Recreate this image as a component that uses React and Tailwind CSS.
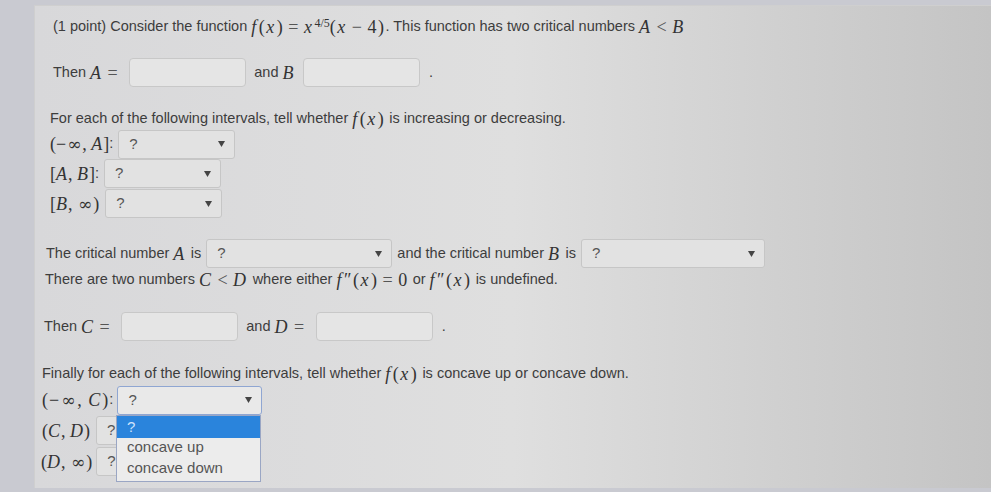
import React from "react";

// MathJax-like inline math: wide glyph spacing for formulas, tighter for interval labels
const serif = "font-['Liberation_Serif','DejaVu_Serif',serif] text-[18px] leading-none text-[#333]";
const formula = serif + " tracking-[1.5px]";

const V = ({ children }) => <i className="italic pr-[1px]">{children}</i>;
const Op = ({ children }) => <span className="mx-[4px] text-[#555]">{children}</span>;
const Inf = () => <span className="inline-block px-[1px] font-['DejaVu_Serif',serif] text-[17px]">∞</span>;

const Caret = () => (
  <svg width="7" height="6" viewBox="0 0 7 6" className="shrink-0">
    <path d="M0 0 L7 0 L3.5 6 Z" fill="#444" />
  </svg>
);

const Select = ({ w, focused }) => (
  <div
    className={
      "flex h-[29px] items-center justify-between rounded-[3px] border pl-[10px] pr-[9px] text-[15px] text-[#555] " +
      (focused ? "border-[#8fa6d2] bg-[#e9e9e9]" : "border-[#c6c6c6] bg-[#e2e2e2]")
    }
    style={{ width: w }}
  >
    <span>?</span>
    <Caret />
  </div>
);

const Input = () => (
  <div className="h-[29px] w-[117px] rounded-[4px] border border-[#c8c8c8] bg-[#e5e5e5]" />
);

const App = () => {
  return (
    <div className="h-[492px] w-[991px] overflow-hidden bg-[#c9cad1] pl-[34px] pt-[5px] font-['Liberation_Sans',Arial,sans-serif] text-[14.5px] text-[#3d3d3d]">
      <div className="relative h-[483px] border-l border-t border-[#cfcfcf] bg-gradient-to-r from-[#d8d8da] via-[#dfdfdf] to-[#c4c4c4]">
        {/* first question */}
        <div className="box-content flex h-[24px] items-center pl-[18px] pt-[9px]">
          <span>(1 point) Consider the function&nbsp;</span>
          <span className={formula}>
            <V>f</V>(<V>x</V>)<Op>=</Op><V>x</V>
            <sup className="text-[12px] tracking-normal">4/5</sup>(<V>x</V><Op>−</Op>4)
          </span>
          <span>. This function has two critical numbers&nbsp;</span>
          <span className={formula}>
            <V>A</V><Op>&lt;</Op><V>B</V>
          </span>
        </div>

        <div className="mt-[19px] flex h-[29px] items-center pl-[18px]">
          <span>Then&nbsp;</span>
          <span className={formula}>
            <V>A</V><Op>=</Op>
          </span>
          <span className="ml-[6px]">
            <Input />
          </span>
          <span className="ml-[8px]">and&nbsp;</span>
          <span className={formula}>
            <V>B</V>
          </span>
          <span className="ml-[7px]">
            <Input />
          </span>
          <span className="ml-[9px]">.</span>
        </div>

        {/* increasing / decreasing */}
        <div className="mt-[21px] flex h-[22px] items-center pl-[15px]">
          <span>For each of the following intervals, tell whether&nbsp;</span>
          <span className={formula}>
            <V>f</V>(<V>x</V>)
          </span>
          <span>&nbsp;is increasing or decreasing.</span>
        </div>
        <div className="flex h-[28px] items-center pl-[15px]">
          <span className={serif}>
            (−<Inf />, <V>A</V>]
          </span>
          <span className="mr-[5px]">:</span>
          <Select w="117px" />
        </div>
        <div className="mt-[1px] flex h-[29px] items-center pl-[15px]">
          <span className={serif}>
            [<V>A</V>, <V>B</V>]
          </span>
          <span className="mr-[5px]">:</span>
          <Select w="117px" />
        </div>
        <div className="mt-[1px] flex h-[29px] items-center pl-[15px]">
          <span className={serif + " mr-[6px]"}>
            [<V>B</V>, <Inf />)
          </span>
          <Select w="117px" />
        </div>

        {/* max / min */}
        <div className="mt-[21px] flex h-[29px] items-center pl-[11px]">
          <span>The critical number&nbsp;</span>
          <span className={formula}>
            <V>A</V>
          </span>
          <span className="mr-[5px]">&nbsp;is</span>
          <Select w="186px" />
          <span className="ml-[5px]">and the critical number&nbsp;</span>
          <span className={formula}>
            <V>B</V>
          </span>
          <span className="mr-[5px]">&nbsp;is</span>
          <Select w="184px" />
        </div>
        <div className="flex h-[23px] items-center pl-[10px]">
          <span>There are two numbers&nbsp;</span>
          <span className={formula}>
            <V>C</V><Op>&lt;</Op><V>D</V>
          </span>
          <span>&nbsp;where either&nbsp;</span>
          <span className={formula}>
            <V>f</V>″(<V>x</V>)<Op>=</Op>0
          </span>
          <span>&nbsp;or&nbsp;</span>
          <span className={formula}>
            <V>f</V>″(<V>x</V>)
          </span>
          <span>&nbsp;is undefined.</span>
        </div>

        <div className="mt-[21px] flex h-[29px] items-center pl-[9px]">
          <span>Then&nbsp;</span>
          <span className={formula}>
            <V>C</V><Op>=</Op>
          </span>
          <span className="ml-[6px]">
            <Input />
          </span>
          <span className="ml-[8px]">and&nbsp;</span>
          <span className={formula}>
            <V>D</V><Op>=</Op>
          </span>
          <span className="ml-[6px]">
            <Input />
          </span>
          <span className="ml-[9px]">.</span>
        </div>

        {/* concavity */}
        <div className="mt-[22px] flex h-[22px] items-center pl-[7px]">
          <span>Finally for each of the following intervals, tell whether&nbsp;</span>
          <span className={formula}>
            <V>f</V>(<V>x</V>)
          </span>
          <span>&nbsp;is concave up or concave down.</span>
        </div>
        <div className="flex h-[30px] items-center pl-[7px]">
          <span className={serif + " tracking-[1px]"}>
            (−<Inf />, <V>C</V>)
          </span>
          <span className="mr-[4px]">:</span>
          <Select w="145px" focused />
        </div>
        <div className="mt-[1px] flex h-[29px] items-center pl-[7px]">
          <span className={serif + " mr-[6px]"}>
            (<V>C</V>, <V>D</V>)
          </span>
          <Select w="117px" />
        </div>
        <div className="mt-[2px] flex h-[29px] items-center pl-[6px]">
          <span className={serif + " mr-[4px]"}>
            (<V>D</V>, <Inf />)
          </span>
          <Select w="117px" />
        </div>

        {/* open dropdown list */}
        <div className="absolute left-[81px] top-[409px] w-[145px] border border-[#9aa6c4] bg-[#ececec] text-[15px] text-[#555]">
          <div className="flex h-[22px] items-center bg-[#2a84dc] pl-[10px] text-[#cfe3fb]">?</div>
          <div className="flex h-[20px] items-end pl-[10px]">concave up</div>
          <div className="flex h-[23px] items-center pb-[2px] pl-[10px]">concave down</div>
        </div>
      </div>
    </div>
  );
};

export default App;
